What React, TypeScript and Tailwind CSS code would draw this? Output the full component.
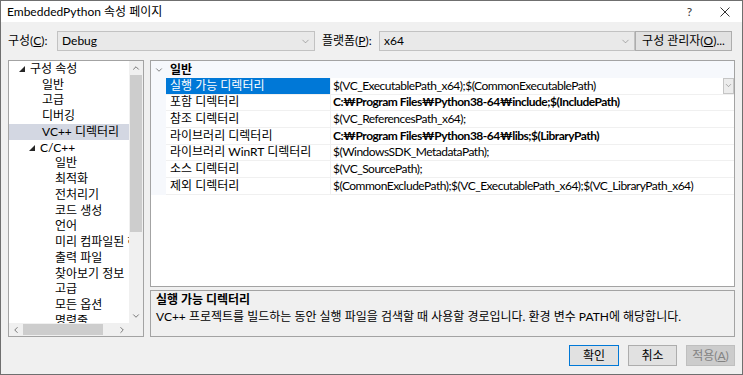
import React from 'react';
import { ChevronDown, ChevronUp, ChevronLeft, ChevronRight } from 'lucide-react';

const font = { fontFamily: 'Lato, "Noto Sans CJK KR", sans-serif' };

type TreeItem = { label: string; level: number; expander?: boolean; selected?: boolean };

const tree: TreeItem[] = [
  { label: '구성 속성', level: 0, expander: true },
  { label: '일반', level: 1 },
  { label: '고급', level: 1 },
  { label: '디버깅', level: 1 },
  { label: 'VC++ 디렉터리', level: 1, selected: true },
  { label: 'C/C++', level: 1, expander: true },
  { label: '일반', level: 2 },
  { label: '최적화', level: 2 },
  { label: '전처리기', level: 2 },
  { label: '코드 생성', level: 2 },
  { label: '언어', level: 2 },
  { label: '미리 컴파일된 헤더', level: 2 },
  { label: '출력 파일', level: 2 },
  { label: '찾아보기 정보', level: 2 },
  { label: '고급', level: 2 },
  { label: '모든 옵션', level: 2 },
  { label: '명령줄', level: 2 },
];

const props = [
  { name: '실행 가능 디렉터리', value: '$(VC_ExecutablePath_x64);$(CommonExecutablePath)', selected: true },
  { name: '포함 디렉터리', value: 'C:₩Program Files₩Python38-64₩include;$(IncludePath)', bold: true },
  { name: '참조 디렉터리', value: '$(VC_ReferencesPath_x64);' },
  { name: '라이브러리 디렉터리', value: 'C:₩Program Files₩Python38-64₩libs;$(LibraryPath)', bold: true },
  { name: '라이브러리 WinRT 디렉터리', value: '$(WindowsSDK_MetadataPath);' },
  { name: '소스 디렉터리', value: '$(VC_SourcePath);' },
  { name: '제외 디렉터리', value: '$(CommonExcludePath);$(VC_ExecutablePath_x64);$(VC_LibraryPath_x64)' },
];

const Expander = () => (
  <svg width="6" height="6" viewBox="0 0 6 6" className="shrink-0">
    <polygon points="6,0 6,6 0,6" fill="#262626" />
  </svg>
);

const Combo = ({ value, width }: { value: string; width: string }) => (
  <div className={`${width} shrink-0 h-[20px] bg-[#e9e9e9] border border-[#c2c2c2] flex items-center justify-between pl-[4px] pr-[3px]`}>
    <span>{value}</span>
    <ChevronDown size={11} strokeWidth={1.2} className="text-[#707070]" />
  </div>
);

const App: React.FC = () => {
  return (
    <div style={font} className="w-[743px] h-[375px] bg-[#f0f0f0] border border-[#6f6f6f] flex flex-col text-[12px] text-black leading-none overflow-hidden">
      {/* title bar */}
      <div className="h-[21px] bg-white flex items-center justify-between pl-[6px]">
        <span className="text-[12px]">EmbeddedPython 속성 페이지</span>
        <div className="flex items-center">
          <span className="text-[12px] text-[#333] mr-[28px]">?</span>
          <svg width="10" height="10" viewBox="0 0 10 10" className="mr-[12px]">
            <path d="M0.5 0.5 L9.5 9.5 M9.5 0.5 L0.5 9.5" stroke="#333" strokeWidth="1" />
          </svg>
        </div>
      </div>

      {/* toolbar */}
      <div className="mt-[9px] h-[20px] flex items-center pl-[7px]">
        <span className="w-[49px] shrink-0">
          구성(<span className="underline">C</span>):
        </span>
        <Combo value="Debug" width="w-[258px]" />
        <span className="ml-[7px] w-[57px] shrink-0">
          플랫폼(<span className="underline">P</span>):
        </span>
        <Combo value="x64" width="w-[256px]" />
        <div className="w-[97px] shrink-0 h-[20px] bg-[#e1e1e1] border border-[#adadad] flex items-center justify-center">
          구성 관리자(<span className="underline">O</span>)...
        </div>
      </div>

      {/* main */}
      <div className="mt-[9px] h-[277px] flex pl-[7px]">
        {/* tree */}
        <div className="w-[136px] shrink-0 h-full border border-[#a3a3a3] bg-white flex flex-col">
          <div className="flex flex-1 min-h-0">
            <div className="w-[120px] shrink-0 overflow-hidden">
              {tree.map((t, i) => (
                <div
                  key={i}
                  className={`h-[15.75px] flex items-center whitespace-nowrap ${t.selected ? 'bg-[#d3d7e2]' : ''}`}
                  style={{ paddingLeft: t.expander ? 10 + t.level * 10 : t.level === 1 ? 33 : 46 }}
                >
                  {t.expander && <Expander />}
                  <span className={t.expander ? 'ml-[5px]' : ''}>{t.label}</span>
                </div>
              ))}
            </div>
            {/* vertical scrollbar */}
            <div className="w-[14px] shrink-0 bg-[#f0f0f0] flex flex-col">
              <div className="h-[14px] flex items-center justify-center">
                <ChevronUp size={10} strokeWidth={2} className="text-[#606060]" />
              </div>
              <div className="mx-[1px] h-[157px] bg-[#cdcdcd]" />
              <div className="flex-1" />
              <div className="h-[14px] flex items-center justify-center">
                <ChevronDown size={10} strokeWidth={2} className="text-[#606060]" />
              </div>
            </div>
          </div>
          {/* horizontal scrollbar */}
          <div className="h-[13px] flex bg-[#f0f0f0]">
            <div className="w-[14px] flex items-center justify-center">
              <ChevronLeft size={10} strokeWidth={2} className="text-[#606060]" />
            </div>
            <div className="w-[80px] my-[1px] bg-[#cdcdcd]" />
            <div className="flex-1" />
            <div className="w-[14px] flex items-center justify-center">
              <ChevronRight size={10} strokeWidth={2} className="text-[#606060]" />
            </div>
            <div className="w-[14px]" />
          </div>
        </div>

        {/* right column */}
        <div className="ml-[6px] w-[585px] shrink-0 h-full flex flex-col">
          {/* property grid */}
          <div className="h-[228px] border border-[#a3a3a3] bg-white flex flex-col">
            <div className="h-[17px] bg-[#f6f8fc] flex items-center">
              <div className="w-[15px] shrink-0 flex justify-center">
                <ChevronDown size={10} strokeWidth={1.6} className="text-[#444]" />
              </div>
              <span className="ml-[4px] font-bold">일반</span>
            </div>
            <div className="flex">
              <div className="w-[15px] shrink-0 bg-[#f6f8fc]" />
              <div className="flex-1 min-w-0">
                {props.map((p, i) => (
                  <div key={i} className="h-[16.67px] flex border-b border-[#f0f0f0]">
                    <div
                      className={`w-[165px] shrink-0 flex items-center pl-[4px] whitespace-nowrap border-r border-[#f0f0f0] ${p.selected ? 'bg-[#0078d7] text-white' : ''}`}
                    >
                      {p.name}
                    </div>
                    <div className="flex-1 min-w-0 flex items-center pl-[2px] whitespace-nowrap justify-between">
                      <span className={`tracking-[-0.5px] ${p.bold ? 'font-bold' : ''}`}>{p.value}</span>
                      {p.selected && (
                        <div className="w-[11px] shrink-0 h-full bg-[#ececec] border border-[#c5c5c5] flex items-center justify-center">
                          <ChevronDown size={9} strokeWidth={1.4} className="text-[#707070]" />
                        </div>
                      )}
                    </div>
                  </div>
                ))}
              </div>
            </div>
          </div>

          {/* description */}
          <div className="mt-[3px] h-[47px] border border-[#a3a3a3] bg-[#f0f0f0] pl-[5px] pt-[3px] flex flex-col gap-[5px]">
            <span className="font-bold">실행 가능 디렉터리</span>
            <span>VC++ 프로젝트를 빌드하는 동안 실행 파일을 검색할 때 사용할 경로입니다. 환경 변수 PATH에 해당합니다.</span>
          </div>
        </div>
      </div>

      {/* buttons */}
      <div className="mt-[8px] h-[21px] flex justify-end pr-[7px]">
        <div className="w-[50px] h-full bg-[#e1e1e1] border border-[#0078d7] flex items-center justify-center">확인</div>
        <div className="ml-[9px] w-[49px] h-full bg-[#e1e1e1] border border-[#adadad] flex items-center justify-center">취소</div>
        <div className="ml-[9px] w-[49px] h-full bg-[#cccccc] border border-[#bfbfbf] flex items-center justify-center text-[#838383]">
          적용(<span className="underline">A</span>)
        </div>
      </div>
    </div>
  );
};

export default App;
